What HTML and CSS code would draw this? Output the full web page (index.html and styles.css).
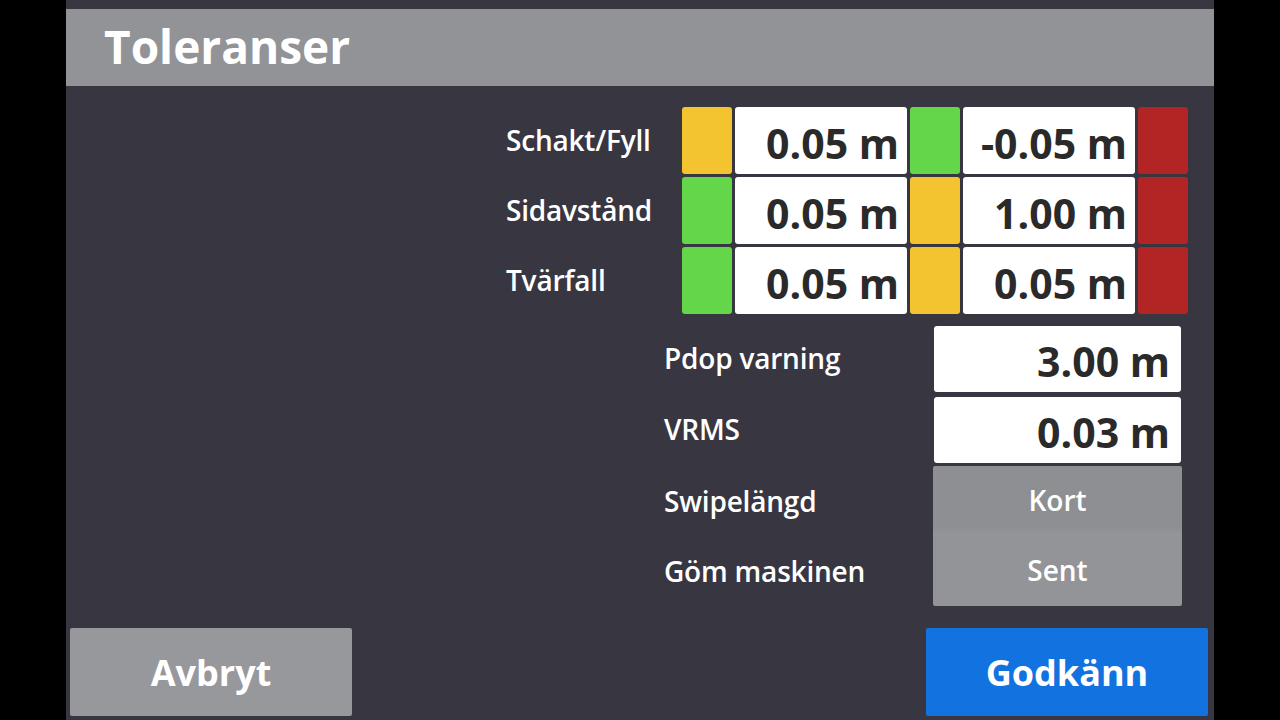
FILE: index.html
```html
<!DOCTYPE html>
<html lang="sv">
<head>
<meta charset="utf-8">
<title>Toleranser</title>
<link rel="stylesheet" href="styles.css">
</head>
<body>
<div class="screen">
  <header class="header"><h1 class="title">Toleranser</h1></header>

  <section class="tol">
    <div class="tol-row">
      <div class="label">Schakt/Fyll</div>
      <div class="sw yellow"></div>
      <div class="val">0.05 m</div>
      <div class="sw green"></div>
      <div class="val">-0.05 m</div>
      <div class="sw red"></div>
    </div>
    <div class="tol-row">
      <div class="label">Sidavstånd</div>
      <div class="sw green"></div>
      <div class="val">0.05 m</div>
      <div class="sw yellow"></div>
      <div class="val">1.00 m</div>
      <div class="sw red"></div>
    </div>
    <div class="tol-row">
      <div class="label">Tvärfall</div>
      <div class="sw green"></div>
      <div class="val">0.05 m</div>
      <div class="sw yellow"></div>
      <div class="val">0.05 m</div>
      <div class="sw red"></div>
    </div>
  </section>

  <section class="settings">
    <div class="set-row input-row">
      <div class="set-label">Pdop varning</div>
      <div class="input">3.00 m</div>
    </div>
    <div class="set-row input-row second">
      <div class="set-label">VRMS</div>
      <div class="input">0.03 m</div>
    </div>
    <div class="set-row sel-row first-sel">
      <div class="set-label">Swipelängd</div>
      <div class="select">Kort</div>
    </div>
    <div class="set-row sel-row">
      <div class="set-label">Göm maskinen</div>
      <div class="select">Sent</div>
    </div>
  </section>

  <footer class="actions">
    <button class="btn cancel">Avbryt</button>
    <button class="btn ok">Godkänn</button>
  </footer>
</div>
</body>
</html>
```

FILE: styles.css
```css
* { box-sizing: border-box; }
html, body {
  margin: 0;
  padding: 0;
  background: #000;
  width: 1280px;
  height: 720px;
  overflow: hidden;
  font-family: "Open Sans", "DejaVu Sans", sans-serif;
}
.screen {
  margin-left: 66px;
  width: 1148px;
  height: 720px;
  background: #383641;
  padding-top: 9px;
  display: flex;
  flex-direction: column;
}
.header {
  height: 77px;
  background: #919396;
  display: flex;
  align-items: center;
  padding-left: 38px;
}
.title {
  margin: 0;
  color: #fff;
  font-size: 46px;
  font-weight: 700;
  line-height: 1;
  padding-bottom: 4px;
}
.tol {
  margin-top: 21px;
  margin-left: 440px;
  display: flex;
  flex-direction: column;
  gap: 3px;
}
.tol-row {
  display: grid;
  grid-template-columns: 173px 50px 172px 50px 172px 50px;
  column-gap: 3px;
  height: 67px;
}
.label, .set-label {
  color: #fff;
  font-size: 28px;
  font-weight: 600;
  letter-spacing: -0.2px;
  white-space: nowrap;
  display: flex;
  align-items: center;
  padding-bottom: 2px;
}
.sw {
  border-radius: 3px;
}
.yellow { background: #f4c430; }
.green { background: #63d64a; }
.red { background: #b32424; }
.val, .input {
  background: #fff;
  border-radius: 3px;
  color: #2a2a2a;
  font-size: 41px;
  font-weight: 700;
  display: flex;
  align-items: center;
  justify-content: flex-end;
  padding-right: 8px;
  padding-top: 5px;
}
.settings {
  margin-top: 12px;
  margin-left: 598px;
  display: flex;
  flex-direction: column;
}
.set-row {
  display: grid;
  grid-template-columns: 270px 247px;
}
.input-row { height: 66px; }
.input-row.second { margin-top: 5px; }
.input { padding-right: 11px; padding-top: 3px; }
.sel-row { height: 70px; grid-template-columns: 269px 249px; }
.first-sel { margin-top: 3px; }
.sel-row .set-label { padding-top: 2px; }
.select {
  background: #8f9094;
  color: #fff;
  font-size: 28px;
  font-weight: 600;
  display: flex;
  align-items: center;
  justify-content: center;
  padding-bottom: 2px;
}
.first-sel .select {
  border-radius: 2px 2px 0 0;
  background: linear-gradient(#8e8f93 0%, #8e8f93 85%, #95969a 100%);
}
.sel-row:last-child .select {
  border-radius: 0 0 2px 2px;
  background: #939498;
}
.actions {
  margin-top: 22px;
  display: flex;
  justify-content: space-between;
  padding: 0 6px 0 4px;
}
.btn {
  width: 282px;
  height: 88px;
  border: none;
  border-radius: 2px;
  color: #fff;
  font-family: "Open Sans", "DejaVu Sans", sans-serif;
  font-size: 36px;
  font-weight: 700;
  padding: 0 0 0;
}
.cancel { background: #97989c; }
.ok { background: #1273e0; }
```
